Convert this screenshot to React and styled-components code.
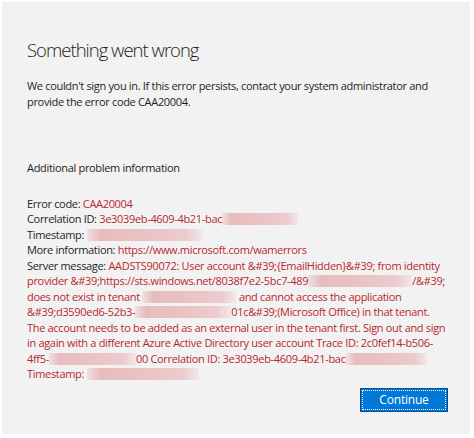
import React from "react";
import styled, { createGlobalStyle } from "styled-components";

const Global = createGlobalStyle`
  html, body { margin: 0; padding: 0; background: #ffffff; }
  body { font-family: "Open Sans", "Noto Sans", sans-serif; }
`;

const Panel = styled.div`
  margin: 2px 4px 0 2px;
  height: 432px;
  box-sizing: border-box;
  background: #f2f2f2;
  padding: 35px 0 0 25px;
  display: flex;
  flex-direction: column;
  color: #1e1e1e;
`;

const Title = styled.h1`
  margin: 0;
  font-size: 18.5px;
  font-weight: 300;
  line-height: 26px;
  color: #1b1b1b;
  letter-spacing: -1px;
`;

const Para = styled.p`
  margin: ${(p) => p.$mt || 0}px 0 0 0;
  font-size: 11px;
  line-height: 15.5px;
  letter-spacing: -0.32px;
  color: #1e1e1e;
`;

const InfoBlock = styled.div`
  margin-top: ${(p) => p.$mt}px;
  font-size: 11px;
  line-height: 15.5px;
  letter-spacing: -0.32px;
`;

const Line = styled.div`
  white-space: nowrap;
  color: ${(p) => (p.$red ? "#b7282e" : "#1e1e1e")};
`;

const Red = styled.span`
  color: #b7282e;
`;

const Redact = styled.span`
  display: inline-block;
  width: ${(p) => p.$w}px;
  height: 12px;
  vertical-align: -2px;
  background: linear-gradient(
    90deg,
    rgba(232, 186, 188, 0.3) 0%,
    rgba(230, 184, 186, 0.95) 12%,
    rgba(236, 198, 200, 0.9) 85%,
    rgba(236, 198, 200, 0.2) 100%
  );
  filter: blur(0.6px);
`;

const Footer = styled.div`
  margin-top: 6px;
  padding-right: 22px;
  display: flex;
  justify-content: flex-end;
`;

const Button = styled.button`
  width: 88px;
  height: 24px;
  background: #0078d7;
  border: 1px solid #0a4a86;
  outline: 1px dotted #ffffff;
  outline-offset: -3px;
  color: #ffffff;
  font-family: "Open Sans", "Noto Sans", sans-serif;
  font-size: 12px;
  letter-spacing: -0.2px;
  padding: 0;
  cursor: pointer;
`;

export default function App() {
  return (
    <>
      <Global />
      <Panel>
        <Title>Something went wrong</Title>
        <Para $mt={15}>
          We couldn't sign you in. If this error persists, contact your system administrator and
          <br />
          provide the error code CAA20004.
        </Para>
        <Para $mt={51}>Additional problem information</Para>
        <InfoBlock $mt={20}>
          <Line>
            Error code: <Red>CAA20004</Red>
          </Line>
          <Line>
            Correlation ID: <Red>3e3039eb-4609-4b21-bac</Red>
            <Redact $w={76} />
          </Line>
          <Line>
            Timestamp: <Redact $w={116} />
          </Line>
          <Line>
            More information: <Red>https://www.microsoft.com/wamerrors</Red>
          </Line>
          <Line>
            Server message: <Red>AADSTS90072: User account &amp;#39;{"{EmailHidden}"}&amp;#39; from identity</Red>
          </Line>
          <Line $red>
            provider &amp;#39;https://sts.windows.net/8038f7e2-5bc7-489<Redact $w={104} />/&amp;#39;
          </Line>
          <Line $red>
            does not exist in tenant <Redact $w={94} /> and cannot access the application
          </Line>
          <Line $red>
            &amp;#39;d3590ed6-52b3-<Redact $w={96} />01c&amp;#39;(Microsoft Office) in that tenant.
          </Line>
          <Line $red>
            The account needs to be added as an external user in the tenant first. Sign out and sign
          </Line>
          <Line $red>
            in again with a different Azure Active Directory user account Trace ID: 2c0fef14-b506-
          </Line>
          <Line $red>
            4ff5-<Redact $w={87} />00 Correlation ID: 3e3039eb-4609-4b21-bac<Redact $w={81} />
          </Line>
          <Line $red>
            Timestamp: <Redact $w={112} />
          </Line>
        </InfoBlock>
        <Footer>
          <Button>Continue</Button>
        </Footer>
      </Panel>
    </>
  );
}
